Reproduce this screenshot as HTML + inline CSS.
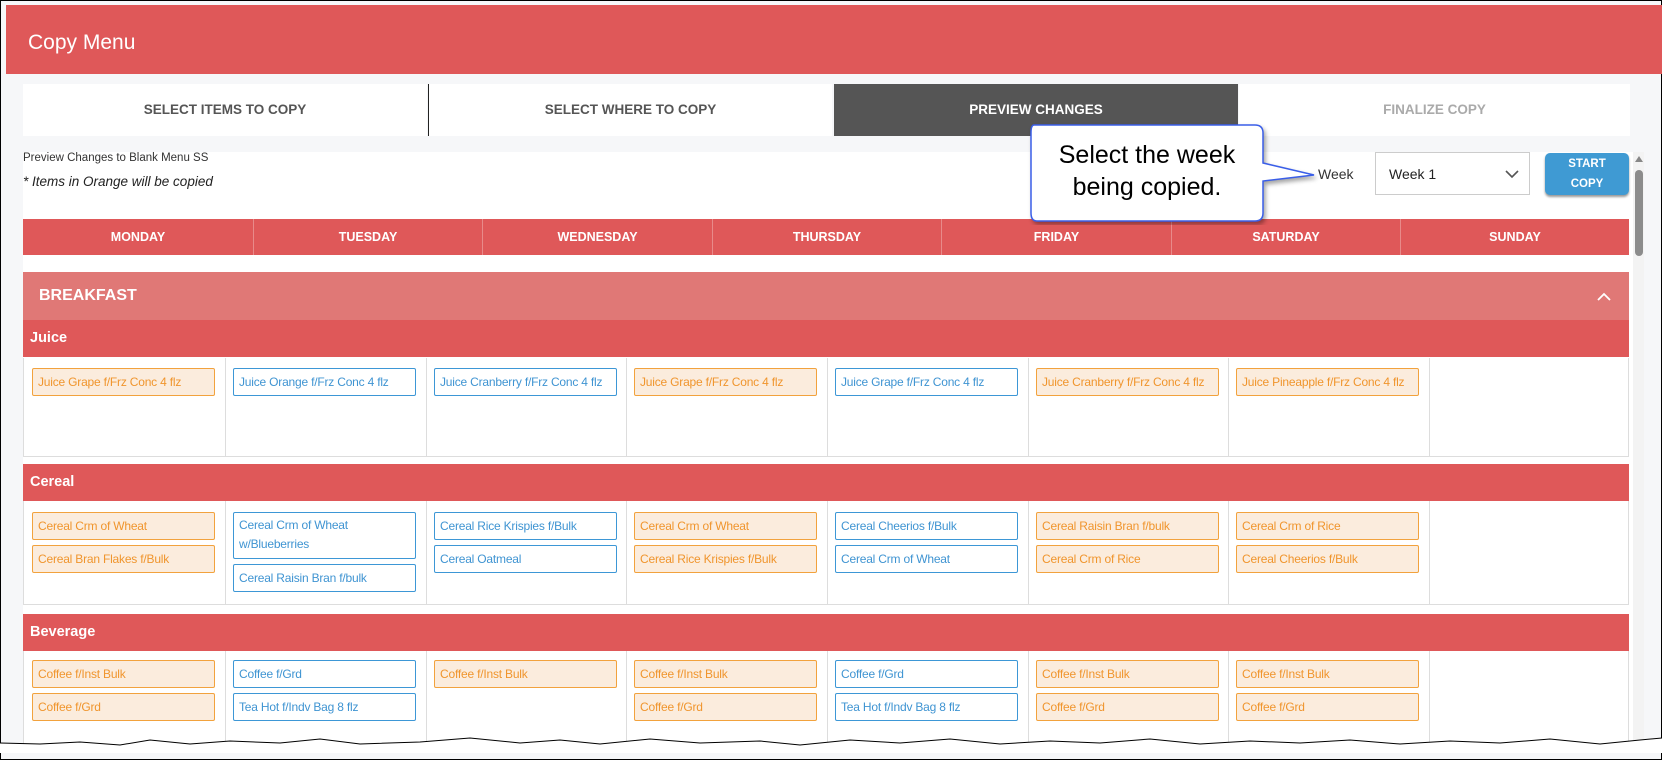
<!DOCTYPE html>
<html><head><meta charset="utf-8"><style>
*{box-sizing:border-box;margin:0;padding:0}
body{width:1662px;height:753px;background:#fff;font-family:"Liberation Sans",sans-serif;position:relative;overflow:hidden}
.a{position:absolute}
#frame{left:0;top:0;width:1662px;height:760px;border:1px solid #000;background:#f6f7f9}
#hdr{left:6px;top:5px;width:1656px;height:69px;background:#df5859;color:#fff;font-size:21px;padding:26px 0 0 22px}
.tab{top:84px;height:52px;width:404px;background:#fff;color:#555;font-weight:bold;font-size:13.5px;text-align:center;line-height:52px}
#panel{left:23px;top:152px;width:1610px;height:600px;background:#fff}
.day{top:219px;height:36px;background:#df5859;color:#fff;font-weight:bold;font-size:12.5px;text-align:center;line-height:36px;border-left:1px solid #e88a8a}
.cat{left:23px;width:1606px;height:37px;background:#df5859;color:#fff;font-weight:bold;font-size:14.5px;padding-left:7px;line-height:37px}
.row{left:23px;width:1606px;background:#fff;border:1px solid #ddd;border-top:none}
.col{position:absolute;top:0;bottom:0;border-left:1px solid #ddd}
.it{position:absolute;height:28px;width:183px;font-size:12px;line-height:26px;padding-left:5px;border:1px solid;border-radius:2px;white-space:nowrap;overflow:hidden;letter-spacing:-0.2px}
.o{background:#fbecdd;border-color:#f2a23d;color:#f0952d}
.b{background:#fff;border-color:#3d97d6;color:#3f94d2}
</style></head><body>
<div id="frame" class="a"></div>
<div id="hdr" class="a">Copy Menu</div>
<div class="a tab" style="left:23px">SELECT ITEMS TO COPY</div>
<div class="a tab" style="left:428px;border-left:1px solid #222">SELECT WHERE TO COPY</div>
<div class="a tab" style="left:834px;background:#555;color:#fff">PREVIEW CHANGES</div>
<div class="a tab" style="left:1239px;color:#aaa;width:391px">FINALIZE COPY</div>
<div id="panel" class="a"></div>
<div class="a" style="left:23px;top:152px;font-size:11.5px;color:#333">Preview Changes to Blank Menu SS</div>
<div class="a" style="left:23px;top:174px;font-size:13.5px;font-style:italic;color:#222">* Items in Orange will be copied</div>
<div class="a" style="left:1318px;top:166px;font-size:14px;color:#333">Week</div>
<div class="a" style="left:1375px;top:152px;width:155px;height:43px;border:1px solid #ccc;font-size:14px;color:#222;padding:13px 0 0 13px">Week 1
<svg class="a" style="left:129px;top:17px" width="14" height="9"><path d="M1 1l6 6 6-6" stroke="#555" stroke-width="1.6" fill="none"/></svg></div>
<div class="a" style="left:1545px;top:153px;width:84px;height:42px;background:#3f9ad3;border-radius:5px;color:#fff;font-weight:bold;font-size:11.5px;text-align:center;line-height:20px;padding-top:1px;box-shadow:0 2px 2px #999">START<br>COPY</div>
<div class="a" style="left:1633px;top:152px;width:11px;height:600px;background:#f3f3f3"></div>
<div class="a" style="left:1635px;top:170px;width:8px;height:86px;background:#8c8c8c;border-radius:4px"></div>
<svg class="a" style="left:1634px;top:155px" width="10" height="8"><path d="M1 7L5 1L9 7Z" fill="#888"/></svg>
<div class="a day" style="left:23px;width:230px;border-left:none">MONDAY</div>
<div class="a day" style="left:253px;width:229px">TUESDAY</div>
<div class="a day" style="left:482px;width:230px">WEDNESDAY</div>
<div class="a day" style="left:712px;width:229px">THURSDAY</div>
<div class="a day" style="left:941px;width:230px">FRIDAY</div>
<div class="a day" style="left:1171px;width:229px">SATURDAY</div>
<div class="a day" style="left:1400px;width:229px">SUNDAY</div>
<div class="a" style="left:23px;top:272px;width:1606px;height:48px;background:#e07876;color:#fff;font-weight:bold;font-size:16px;line-height:48px;padding-left:16px">BREAKFAST
<svg class="a" style="left:1574px;top:20px" width="14" height="9"><path d="M1 8l6-6 6 6" stroke="#fff" stroke-width="1.8" fill="none"/></svg></div>

<div class="a cat" style="top:320px">Juice</div>
<div class="a row" style="top:358px;height:99px">
<div class="col" style="left:201px"></div><div class="col" style="left:402px"></div><div class="col" style="left:602px"></div><div class="col" style="left:803px"></div><div class="col" style="left:1004px"></div><div class="col" style="left:1204px"></div><div class="col" style="left:1405px"></div>
<div class="it o" style="left:8px;top:10px">Juice Grape f/Frz Conc 4 flz</div>
<div class="it b" style="left:209px;top:10px">Juice Orange f/Frz Conc 4 flz</div>
<div class="it b" style="left:410px;top:10px">Juice Cranberry f/Frz Conc 4 flz</div>
<div class="it o" style="left:610px;top:10px">Juice Grape f/Frz Conc 4 flz</div>
<div class="it b" style="left:811px;top:10px">Juice Grape f/Frz Conc 4 flz</div>
<div class="it o" style="left:1012px;top:10px">Juice Cranberry f/Frz Conc 4 flz</div>
<div class="it o" style="left:1212px;top:10px">Juice Pineapple f/Frz Conc 4 flz</div>
</div>

<div class="a cat" style="top:464px">Cereal</div>
<div class="a row" style="top:501px;height:104px">
<div class="col" style="left:201px"></div><div class="col" style="left:402px"></div><div class="col" style="left:602px"></div><div class="col" style="left:803px"></div><div class="col" style="left:1004px"></div><div class="col" style="left:1204px"></div><div class="col" style="left:1405px"></div>
<div class="it o" style="left:8px;top:11px">Cereal Crm of Wheat</div>
<div class="it o" style="left:8px;top:44px">Cereal Bran Flakes f/Bulk</div>
<div class="it b" style="left:209px;top:11px;height:47px;line-height:19px;padding-top:3px;white-space:normal">Cereal Crm of Wheat w/Blueberries</div>
<div class="it b" style="left:209px;top:63px">Cereal Raisin Bran f/bulk</div>
<div class="it b" style="left:410px;top:11px">Cereal Rice Krispies f/Bulk</div>
<div class="it b" style="left:410px;top:44px">Cereal Oatmeal</div>
<div class="it o" style="left:610px;top:11px">Cereal Crm of Wheat</div>
<div class="it o" style="left:610px;top:44px">Cereal Rice Krispies f/Bulk</div>
<div class="it b" style="left:811px;top:11px">Cereal Cheerios f/Bulk</div>
<div class="it b" style="left:811px;top:44px">Cereal Crm of Wheat</div>
<div class="it o" style="left:1012px;top:11px">Cereal Raisin Bran f/bulk</div>
<div class="it o" style="left:1012px;top:44px">Cereal Crm of Rice</div>
<div class="it o" style="left:1212px;top:11px">Cereal Crm of Rice</div>
<div class="it o" style="left:1212px;top:44px">Cereal Cheerios f/Bulk</div>
</div>

<div class="a cat" style="top:614px">Beverage</div>
<div class="a row" style="top:651px;height:100px">
<div class="col" style="left:201px"></div><div class="col" style="left:402px"></div><div class="col" style="left:602px"></div><div class="col" style="left:803px"></div><div class="col" style="left:1004px"></div><div class="col" style="left:1204px"></div><div class="col" style="left:1405px"></div>
<div class="it o" style="left:8px;top:9px">Coffee f/Inst Bulk</div>
<div class="it o" style="left:8px;top:42px">Coffee f/Grd</div>
<div class="it b" style="left:209px;top:9px">Coffee f/Grd</div>
<div class="it b" style="left:209px;top:42px">Tea Hot f/Indv Bag 8 flz</div>
<div class="it o" style="left:410px;top:9px">Coffee f/Inst Bulk</div>
<div class="it o" style="left:610px;top:9px">Coffee f/Inst Bulk</div>
<div class="it o" style="left:610px;top:42px">Coffee f/Grd</div>
<div class="it b" style="left:811px;top:9px">Coffee f/Grd</div>
<div class="it b" style="left:811px;top:42px">Tea Hot f/Indv Bag 8 flz</div>
<div class="it o" style="left:1012px;top:9px">Coffee f/Inst Bulk</div>
<div class="it o" style="left:1012px;top:42px">Coffee f/Grd</div>
<div class="it o" style="left:1212px;top:9px">Coffee f/Inst Bulk</div>
<div class="it o" style="left:1212px;top:42px">Coffee f/Grd</div>
</div>

<svg class="a" style="left:0;top:734px;z-index:10" width="1662" height="19">
<path d="M0 9L40 10 80 8 120 11 150 6 190 10 230 7 280 9 320 5 360 10 420 8 470 4 520 9 560 6 600 10 650 5 700 9 760 7 800 11 850 6 900 9 950 5 1000 10 1050 7 1100 9 1150 5 1200 10 1250 7 1300 9 1350 6 1400 10 1450 7 1500 9 1550 5 1600 10 1640 6 1662 4 L1662 30 0 30Z" fill="#fff"/>
<path d="M0 9L40 10 80 8 120 11 150 6 190 10 230 7 280 9 320 5 360 10 420 8 470 4 520 9 560 6 600 10 650 5 700 9 760 7 800 11 850 6 900 9 950 5 1000 10 1050 7 1100 9 1150 5 1200 10 1250 7 1300 9 1350 6 1400 10 1450 7 1500 9 1550 5 1600 10 1640 6 1662 4" fill="none" stroke="#000" stroke-width="1"/></svg>

<svg class="a" style="left:1025px;top:121px" width="300" height="104">
<path d="M9 4H230Q238 4 238 12V42L289 54L238 60V92Q238 100 230 100H12Q6 100 6 92V12Q6 4 9 4Z" fill="#fff" stroke="#3a5ee8" stroke-width="1.5" style="filter:drop-shadow(2px 3px 2px rgba(0,0,0,.35))"/>
<text x="122" y="42" font-family="Liberation Sans" font-size="25" text-anchor="middle" fill="#000">Select the week</text>
<text x="122" y="74" font-family="Liberation Sans" font-size="25" text-anchor="middle" fill="#000">being copied.</text>
</svg>
</body></html>
